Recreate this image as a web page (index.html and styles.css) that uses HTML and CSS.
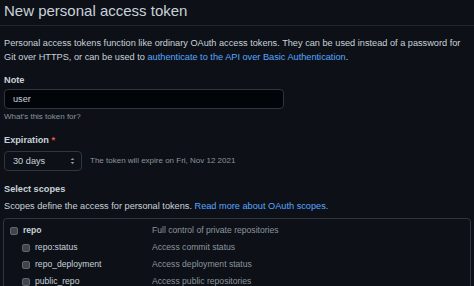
FILE: index.html
```html
<!DOCTYPE html>
<html lang="en">
<head>
<meta charset="utf-8">
<title>New personal access token</title>
<link rel="stylesheet" href="styles.css">
</head>
<body>
<div class="page">
  <h1 class="subhead">New personal access token</h1>
  <div class="content">
    <p class="lead">Personal access tokens function like ordinary OAuth access tokens. They can be used instead of a password for Git over HTTPS, or can be used to <a href="#">authenticate to the API over Basic Authentication</a>.</p>

    <div class="field field-note">
      <label class="label">Note</label>
      <div class="input">user</div>
      <p class="hint">What's this token for?</p>
    </div>

    <div class="field field-exp">
      <label class="label">Expiration <span class="req">*</span></label>
      <div class="exp-row">
        <div class="select">
          <span>30 days</span>
          <svg class="updown" viewBox="0 0 8 12" width="5" height="8"><path d="M4 1 L7 4.5 H1 Z M4 11 L7 7.5 H1 Z" fill="#8b949e"/></svg>
        </div>
        <span class="exp-note">The token will expire on Fri, Nov 12 2021</span>
      </div>
    </div>

    <div class="field field-scopes">
      <label class="label">Select scopes</label>
      <p class="scopes-desc">Scopes define the access for personal tokens. <a href="#">Read more about OAuth scopes.</a></p>
      <div class="scopes">
        <div class="scope-row top">
          <div class="scope-name"><span class="check"></span><b>repo</b></div>
          <div class="scope-desc">Full control of private repositories</div>
        </div>
        <div class="scope-row sub">
          <div class="scope-name"><span class="check"></span>repo:status</div>
          <div class="scope-desc">Access commit status</div>
        </div>
        <div class="scope-row sub">
          <div class="scope-name"><span class="check"></span>repo_deployment</div>
          <div class="scope-desc">Access deployment status</div>
        </div>
        <div class="scope-row sub">
          <div class="scope-name"><span class="check"></span>public_repo</div>
          <div class="scope-desc">Access public repositories</div>
        </div>
      </div>
    </div>
  </div>
</div>
</body>
</html>
```

FILE: styles.css
```css
html, body {
  margin: 0;
  padding: 0;
  background: #0d1117;
}
body {
  font-family: "Liberation Sans", Arial, sans-serif;
  color: #c9d1d9;
  font-size: 9.2px;
  line-height: 14px;
  overflow: hidden;
}
a {
  color: #58a6ff;
  text-decoration: none;
}
.subhead {
  margin: 0;
  padding: 1px 4px 4px;
  font-size: 15px;
  line-height: 20px;
  font-weight: 400;
  color: #c9d1d9;
  border-bottom: 1px solid #21262d;
}
.content {
  padding: 0 4px;
}
.lead {
  margin: 10px 0 0;
}
.field {
  display: flex;
  flex-direction: column;
  align-items: flex-start;
}
.field-note {
  margin-top: 9px;
}
.label {
  font-weight: 700;
  color: #c9d1d9;
}
.req {
  color: #f85149;
}
.input {
  box-sizing: border-box;
  width: 280px;
  height: 20px;
  margin-top: 2px;
  padding: 0 8px;
  line-height: 18px;
  background: #010409;
  border: 1px solid #30363d;
  border-radius: 4px;
  color: #c9d1d9;
}
.hint {
  margin: 2px 0 0;
  font-size: 8px;
  line-height: 12px;
  color: #8b949e;
}
.field-exp {
  margin-top: 10px;
}
.exp-row {
  display: flex;
  align-items: center;
  gap: 8px;
  margin-top: 4px;
}
.select {
  box-sizing: border-box;
  width: 78px;
  height: 20px;
  padding: 0 6px 0 8px;
  display: flex;
  align-items: center;
  justify-content: space-between;
  border: 1px solid #30363d;
  border-radius: 4px;
  background: #0d1117;
}
.exp-note {
  font-size: 8px;
  color: #8b949e;
}
.field-scopes {
  margin-top: 11px;
}
.scopes-desc {
  margin: 3px 0 0;
}
.scopes {
  box-sizing: border-box;
  align-self: stretch;
  margin: 5px -1px 0;
  padding: 3px 0 0;
  border: 1px solid #30363d;
  border-radius: 4px;
  font-size: 8.6px;
}
.scope-row {
  display: grid;
  grid-template-columns: 148px 1fr;
  height: 17px;
  line-height: 17px;
  align-items: center;
}
.scope-name {
  display: flex;
  align-items: center;
  gap: 5px;
  padding-left: 6px;
}
.scope-row.sub .scope-name {
  padding-left: 18px;
}
.scope-desc {
  color: #8b949e;
}
.check {
  box-sizing: border-box;
  width: 8px;
  height: 8px;
  background: #40454c;
  border: 1px solid #60666e;
  border-radius: 2px;
}
```
